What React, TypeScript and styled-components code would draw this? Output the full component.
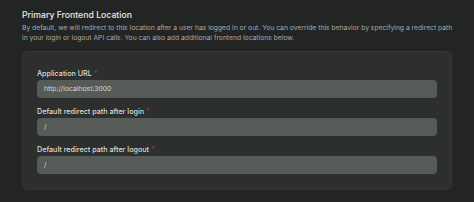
import React from "react";
import styled, { createGlobalStyle } from "styled-components";

const Global = createGlobalStyle`
  html, body { margin: 0; padding: 0; background: #232524; }
  body { font-family: Inter, "Noto Sans", "Liberation Sans", sans-serif; -webkit-font-smoothing: antialiased; }
`;

const Page = styled.div`
  width: 474px;
  height: 202px;
  box-sizing: border-box;
  padding: 9px 22px 0 22px;
  background: #232524;
`;

const Title = styled.h2`
  margin: 0;
  font-size: 8.7px;
  line-height: 12px;
  font-weight: 500;
  color: #e9eae9;
`;

const Description = styled.p`
  margin: 1.5px -4px 0 0;
  font-size: 6.75px;
  line-height: 10.6px;
  color: #a6a9a7;
`;

const Card = styled.div`
  margin-top: 7px;
  box-sizing: border-box;
  border: 1px solid #343736;
  border-radius: 5px;
  background: #2c2f2e;
  padding: 17px 14px 15px 14px;
  display: flex;
  flex-direction: column;
  gap: 9px;
`;

const Field = styled.div`
  display: flex;
  flex-direction: column;
  gap: 2px;
`;

const Label = styled.label`
  font-size: 7.2px;
  line-height: 9px;
  font-weight: 500;
  color: #dcdedc;
`;

const Required = styled.span`
  color: #8e3b3d;
  margin-left: 2px;
`;

const Input = styled.div`
  height: 18px;
  box-sizing: border-box;
  border-radius: 4px;
  background: #565b58;
  padding: 0 7px;
  display: flex;
  align-items: center;
  font-size: 6.8px;
  color: #d2d5d3;
`;

const fields = [
  { label: "Application URL", value: "http://localhost:3000" },
  { label: "Default redirect path after login", value: "/" },
  { label: "Default redirect path after logout", value: "/" },
];

export default function App() {
  return (
    <>
      <Global />
      <Page>
        <Title>Primary Frontend Location</Title>
        <Description>
          By default, we will redirect to this location after a user has logged in or out. You can override this behavior by specifying a redirect path in your login or logout API calls. You can also add additional frontend locations below.
        </Description>
        <Card>
          {fields.map((f) => (
            <Field key={f.label}>
              <Label>
                {f.label}
                <Required>*</Required>
              </Label>
              <Input>{f.value}</Input>
            </Field>
          ))}
        </Card>
      </Page>
    </>
  );
}
